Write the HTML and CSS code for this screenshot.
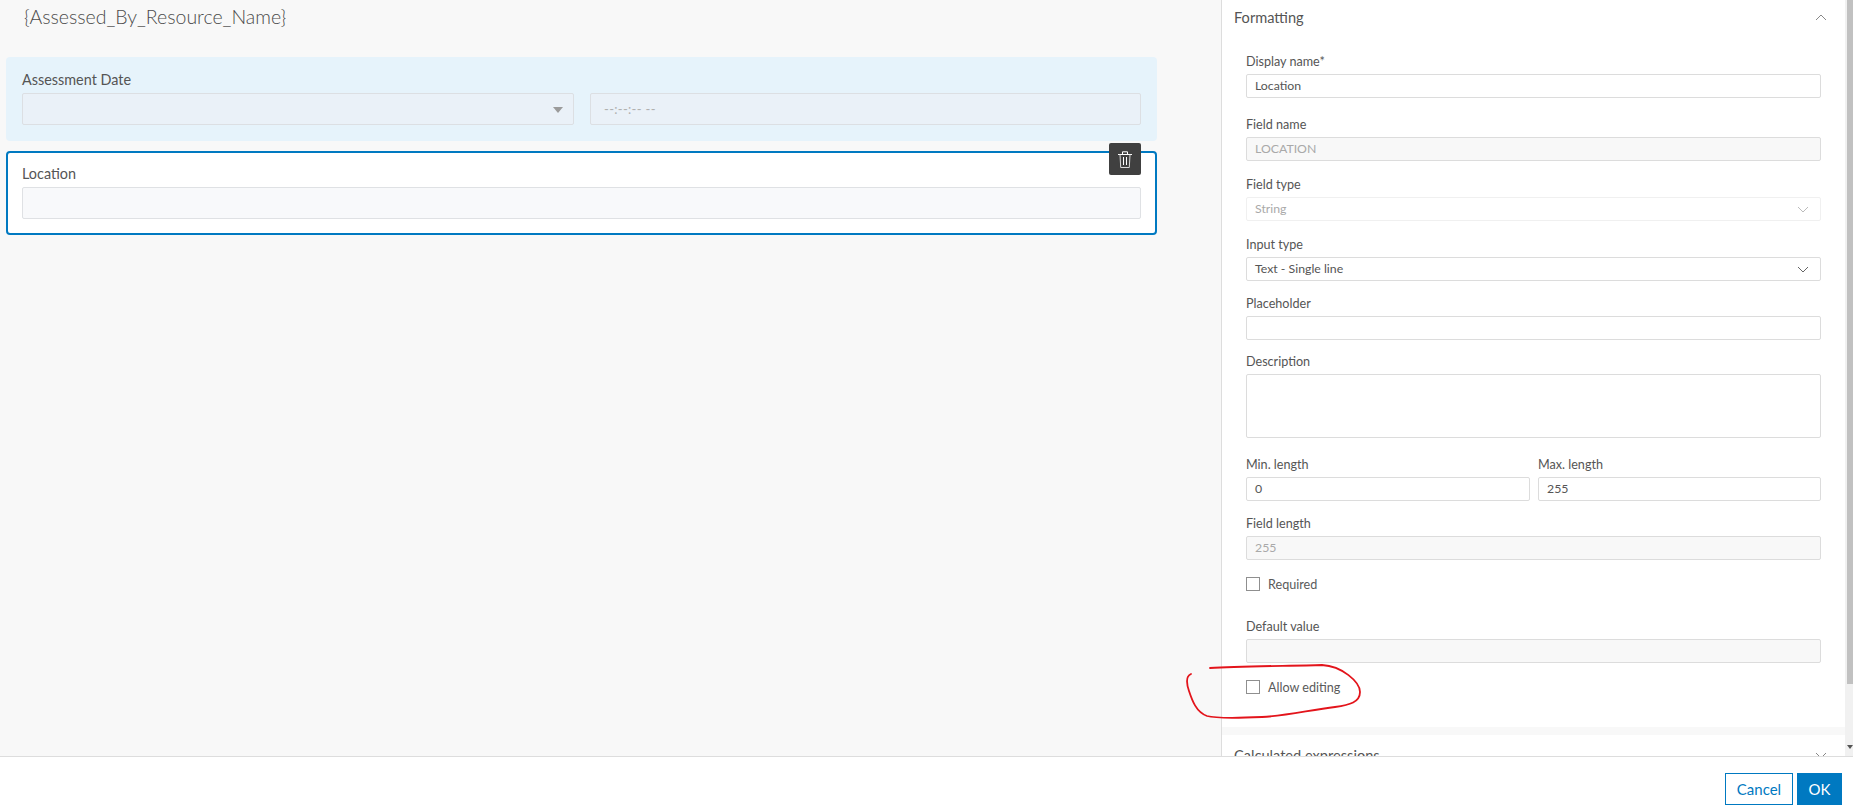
FILE: index.html
```html
<!DOCTYPE html>
<html lang="en">
<head>
<meta charset="utf-8">
<title>Form editor</title>
<link rel="stylesheet" href="styles.css">
</head>
<body>
<div class="app">
  <div class="workspace">
    <main class="canvas">
      <h1 class="form-title">{Assessed_By_Resource_Name}</h1>
      <section class="card card-group">
        <div class="card-label">Assessment Date</div>
        <div class="date-row">
          <div class="box box-tall box-tint date-select"><span class="tri"></span></div>
          <div class="box box-tall box-tint date-time"><span class="time-text">--:--:-- --</span></div>
        </div>
      </section>
      <section class="card card-selected">
        <div class="card-label">Location</div>
        <div class="box box-tall box-soft"></div>
        <button class="trash" aria-label="Delete">
          <svg width="14" height="17" viewBox="0 0 14 17" fill="none" stroke="#fff" stroke-width="1">
            <path d="M0 3.5h14M4.5 3.5V0.8h5v2.7"/>
            <path d="M2 3.5l0.7 13h8.6l0.7-13" stroke="#d8d8d8"/>
            <path d="M5.5 6v8M8.5 6v8"/>
          </svg>
        </button>
      </section>
    </main>
    <aside class="side">
      <div class="side-scroll">
        <div class="panel">
          <div class="panel-head"><span>Formatting</span>
            <svg class="chev" width="12" height="7" viewBox="0 0 12 7" fill="none" stroke="#888" stroke-width="1"><path d="M1 6l5-5 5 5"/></svg>
          </div>
          <div class="field f-first"><label>Display name*</label><div class="box box-white val">Location</div></div>
          <div class="field f-17"><label>Field name</label><div class="box box-off val-off">LOCATION</div></div>
          <div class="field"><label>Field type</label><div class="box box-faint val-off">String
            <svg class="chev-sel" width="12" height="7" viewBox="0 0 12 7" fill="none" stroke="#bbb" stroke-width="1"><path d="M1 1l5 5 5-5"/></svg></div></div>
          <div class="field"><label>Input type</label><div class="box box-white val">Text - Single line
            <svg class="chev-sel" width="12" height="7" viewBox="0 0 12 7" fill="none" stroke="#666" stroke-width="1"><path d="M1 1l5 5 5-5"/></svg></div></div>
          <div class="field f-13"><label>Placeholder</label><div class="box box-white"></div></div>
          <div class="field f-12"><label>Description</label><div class="box box-white box-area"></div></div>
          <div class="two f-17">
            <div class="field f-0"><label>Min. length</label><div class="box box-white val">0</div></div>
            <div class="field f-0"><label>Max. length</label><div class="box box-white val">255</div></div>
          </div>
          <div class="field f-13"><label>Field length</label><div class="box box-off val-off">255</div></div>
          <div class="check check-req"><span class="tick"></span><span>Required</span></div>
          <div class="field f-26"><label>Default value</label><div class="box box-off"></div></div>
          <div class="check check-edit"><span class="tick"></span><span>Allow editing</span></div>
        </div>
        <div class="panel panel-next">
          <div class="panel-head"><span>Calculated expressions</span>
            <svg class="chev" width="12" height="7" viewBox="0 0 12 7" fill="none" stroke="#888" stroke-width="1"><path d="M1 1l5 5 5-5"/></svg>
          </div>
        </div>
      </div>
      <div class="scrollbar"><div class="thumb"></div><span class="arrow"></span></div>
    </aside>
  </div>
  <footer class="footer">
    <button class="btn btn-line">Cancel</button>
    <button class="btn btn-solid">OK</button>
  </footer>
  <svg class="ink" width="1853" height="809" viewBox="0 0 1853 809" fill="none" stroke="#e3141b" stroke-width="1.8" stroke-linecap="round">
    <path d="M1210 668C1240 666 1290 666 1322 665C1342 666 1360 682 1360 692C1360 702 1350 705 1335 707C1310 710 1285 716 1262 717C1240 718 1218 719 1207 716C1196 712 1192 700 1189 691C1186 682 1186 676 1191 674"/>
  </svg>
</div>
</body>
</html>
```
FILE: styles.css
```css
* { box-sizing: border-box; }
html, body { margin: 0; height: 100%; }
body { font-family: Lato, "Open Sans", sans-serif; color: #4a4a4a; background: #fff; overflow: hidden; }
.app { position: relative; width: 1853px; height: 809px; display: flex; flex-direction: column; }
.workspace { height: 756px; display: flex; overflow: hidden; }

.canvas { width: 1221px; background: #f8f8f8; padding: 0 64px 0 6px; }
.form-title { margin: 0; padding: 3px 0 0 18px; height: 57px; font-size: 19.5px; line-height: 28px; font-weight: 300; color: #4c4c4c; }
.card { position: relative; height: 84px; padding: 12px 14px 0; border: 2px solid transparent; border-radius: 4px; }
.card-group { background: #e6f3fb; }
.card-selected { margin-top: 10px; background: #fff; border-color: #0079c1; }
.card-label { height: 22px; font-size: 14.4px; line-height: 18px; color: #555; }
.date-row { display: flex; gap: 16px; }
.date-select { width: 552px; position: relative; }
.date-time { flex: 1; display: flex; align-items: center; padding-left: 13px; }
.time-text { font-size: 13px; letter-spacing: 0.3px; color: #b0b0b0; }
.tri { position: absolute; right: 10px; top: 13px; border: 5px solid transparent; border-top: 6px solid #9b9b9b; border-bottom: 0; }

.box { height: 24px; border: 1px solid #dcdcdc; border-radius: 2px; position: relative; }
.box-tall { height: 32px; }
.box-tint { background: #eaf1f8; border-color: #dcdfe3; }
.box-soft { background: #f8f9fb; border-color: #dfe1e4; }
.box-white { background: #fff; }
.box-off { background: #f8f8f8; }
.box-faint { background: #fff; border-color: #f0f0f0; }
.box-area { height: 64px; }
.val, .val-off { font-size: 12.3px; line-height: 22px; padding-left: 8px; }
.val { color: #555; }
.val-off { color: #a9a9a9; }

.trash { position: absolute; top: -10px; right: 14px; width: 32px; height: 32px; padding: 0; border: 0; border-radius: 2px; background: #404040; display: flex; align-items: center; justify-content: center; }

.side { flex: 1; display: flex; border-left: 1px solid #ddd; background: #fff; }
.side-scroll { flex: 1; overflow: hidden; background: #f8f8f8; }
.panel { background: #fff; height: 727px; padding: 0 0 0 24px; }
.panel-next { margin-top: 8px; height: 60px; }
.panel-head { height: 34px; margin-left: -12px; padding-right: 18px; display: flex; align-items: center; justify-content: space-between; font-size: 14.6px; color: #555; }
.panel-next .panel-head { height: 40px; }
.field { margin-top: 14px; width: 575px; }
.field label { display: block; height: 22px; font-size: 12.6px; line-height: 20px; color: #555; }
.f-first { margin-top: 18px; }
.f-17 { margin-top: 17px; }
.f-13 { margin-top: 13px; }
.f-12 { margin-top: 12px; }
.f-26 { margin-top: 26px; }
.f-0 { margin-top: 0; width: 284px; }
.f-0:last-child { width: 283px; }
.two { display: flex; gap: 8px; width: 575px; }
.chev-sel { position: absolute; right: 11px; top: 8px; }

.check { display: flex; align-items: center; gap: 8px; height: 14px; font-size: 12.6px; color: #5a5a5a; }
.tick { width: 14px; height: 14px; border: 1px solid #8f8f8f; background: #fff; }
.check-req { margin-top: 17px; }
.check-edit { margin-top: 17px; }

.scrollbar { width: 8px; position: relative; background: #f1f1f1; padding-left: 2px; }
.thumb { height: 684px; background: #c1c1c1; }
.arrow { position: absolute; right: 0; top: 745px; border: 3px solid transparent; border-top: 4px solid #555; border-bottom: 0; }

.footer { height: 53px; border-top: 1px solid #ddd; background: #fff; display: flex; justify-content: flex-end; align-items: flex-start; gap: 4px; padding: 16px 11px 0 0; }
.btn { height: 32px; font-family: inherit; font-size: 15px; border: 1px solid #0079c1; padding: 0; }
.btn-line { width: 68px; background: #fff; color: #0079c1; }
.btn-solid { width: 45px; background: #0079c1; color: #fff; }

.ink { position: absolute; left: 0; top: 0; pointer-events: none; }
```
